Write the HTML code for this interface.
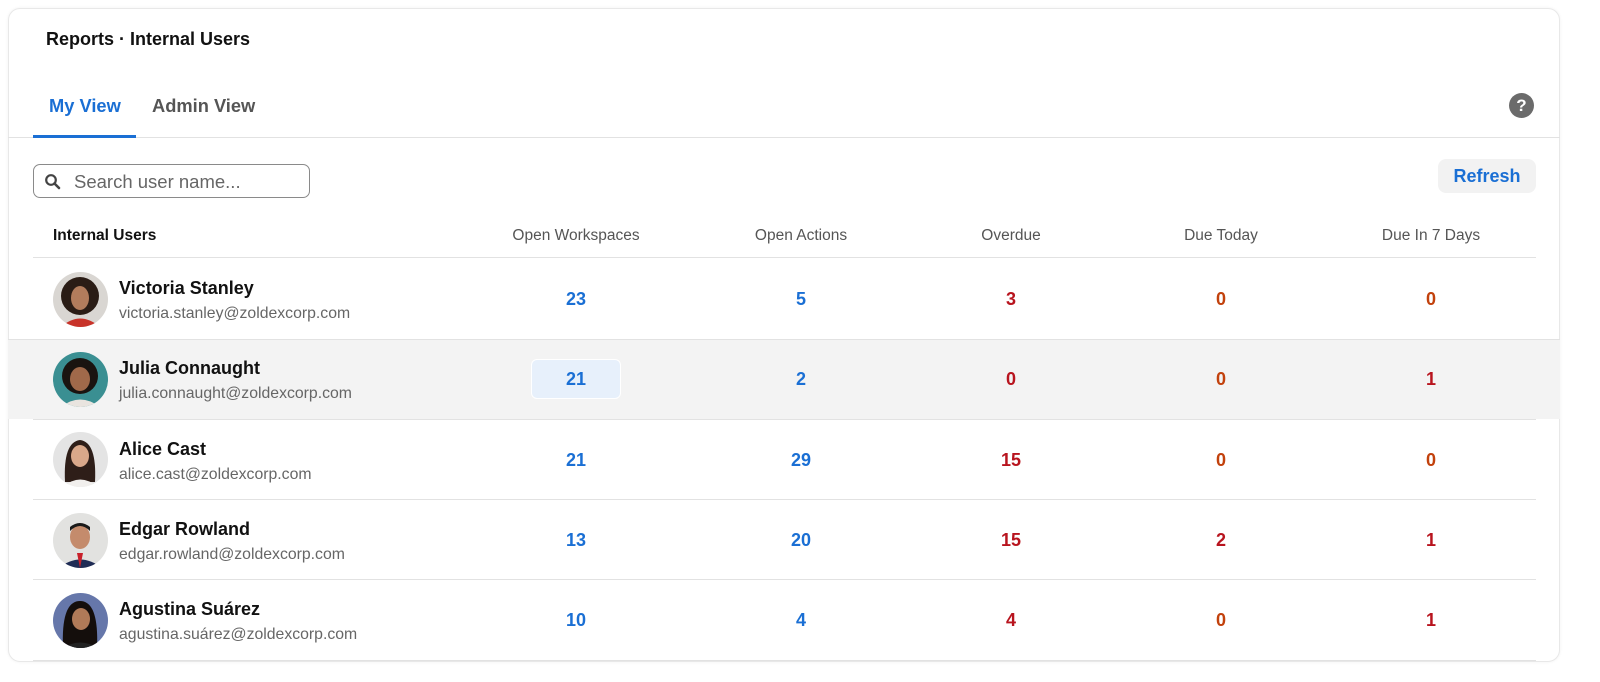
<!DOCTYPE html>
<html><head><meta charset="utf-8">
<style>
*{box-sizing:border-box;margin:0;padding:0}
body{width:1600px;height:682px;background:#fff;font-family:"Liberation Sans",Arial,sans-serif;position:relative;overflow:hidden}
.card{position:absolute;left:8px;top:8px;width:1552px;height:654px;border:1px solid #e8e8e8;border-radius:12px;box-shadow:0 0 3px rgba(0,0,0,.06);overflow:hidden}
.abs{position:absolute}
.title{left:46px;top:29px;font-size:18px;font-weight:bold;color:#111}
.tab{top:95px;font-size:18.3px;font-weight:bold}
.tabline{left:33px;top:135px;width:103px;height:3px;background:#1a6fd4}
.hr{left:8px;top:137px;width:1552px;height:1px;background:#e2e2e2}
.help{left:1509px;top:93px;width:25px;height:25px;border-radius:50%;background:#6b6b6b;color:#fff;font-weight:bold;font-size:17px;text-align:center;line-height:25px}
.search{left:33px;top:164px;width:277px;height:34px;border:1.5px solid #8a8a8a;border-radius:7px}
.search span{position:absolute;left:40px;top:6px;font-size:18.5px;color:#666}
.refresh{left:1438px;top:159px;width:98px;height:34px;border-radius:8px;background:#f2f2f2;color:#1a6fd4;font-weight:bold;font-size:18px;text-align:center;line-height:34px}
.th{top:227px;font-size:15.5px;color:#555;transform:translateX(-50%);white-space:nowrap}
.row{left:33px;width:1503px;height:81px;border-top:1px solid #e2e2e2}
.hl{background:#f3f3f3}
.name{left:119px;font-size:18px;font-weight:bold;color:#111}
.email{left:119px;font-size:15.8px;color:#666}
.av{left:53px;width:55px;height:55px;border-radius:50%;overflow:hidden}
.n{font-size:18px;font-weight:bold;transform:translateX(-50%)}
.b{color:#1a6fd4}.r{color:#b8141e}.o{color:#c2410c}
.pill{left:531px;top:359px;width:90px;height:40px;border-radius:6px;background:#e7f0fb;border:1px solid #fff}
</style></head><body>
<div class="card"></div>
<div class="abs title">Reports · Internal Users</div>
<div class="abs tab" style="left:49px;color:#1a6fd4">My View</div>
<div class="abs tab" style="left:152px;color:#555">Admin View</div>
<div class="abs hr"></div>
<div class="abs tabline"></div>
<div class="abs help">?</div>
<div class="abs search"><svg style="position:absolute;left:10px;top:8px" width="18" height="18" viewBox="0 0 18 18"><circle cx="7" cy="7" r="4.8" fill="none" stroke="#444" stroke-width="2.2"/><path d="M10.5 10.5L15 15" stroke="#444" stroke-width="2.6" stroke-linecap="round"/></svg><span>Search user name...</span></div>
<div class="abs refresh">Refresh</div>

<div class="abs" style="left:53px;top:227px;font-size:15.5px;color:#111;font-weight:bold">Internal Users</div>
<div class="abs th" style="left:576px">Open Workspaces</div>
<div class="abs th" style="left:801px">Open Actions</div>
<div class="abs th" style="left:1011px">Overdue</div>
<div class="abs th" style="left:1221px">Due Today</div>
<div class="abs th" style="left:1431px">Due In 7 Days</div>

<div class="abs row" style="top:257px"></div>
<div class="abs hl" style="left:8px;top:339px;width:1552px;height:80px;border-top:1px solid #e2e2e2"></div>
<div class="abs row" style="top:419px"></div>
<div class="abs row" style="top:499px"></div>
<div class="abs row" style="top:579px"></div>
<div class="abs" style="left:33px;top:660px;width:1503px;height:1px;background:#e2e2e2"></div>
<div class="abs pill"></div>

<svg class="abs av" style="top:272px" viewBox="0 0 55 55"><rect width="55" height="55" fill="#d9d6d2"/><circle cx="27" cy="24" r="19" fill="#2a1c15"/><ellipse cx="27" cy="26" rx="9" ry="12" fill="#b27c5c"/><path d="M8 55 Q27 38 47 55Z" fill="#c8332a"/></svg>
<svg class="abs av" style="top:352px" viewBox="0 0 55 55"><rect width="55" height="55" fill="#3a8f92"/><circle cx="27" cy="24" r="18" fill="#1a1410"/><ellipse cx="27" cy="27" rx="10" ry="12" fill="#a0694a"/><path d="M8 55 Q27 40 47 55Z" fill="#e9e4df"/></svg>
<svg class="abs av" style="top:432px" viewBox="0 0 55 55"><rect width="55" height="55" fill="#e4e4e4"/><path d="M12 50 Q10 10 27 8 Q44 10 42 50Z" fill="#2e1e18"/><ellipse cx="27" cy="24" rx="9" ry="11" fill="#d9a88a"/><path d="M10 55 Q27 40 45 55Z" fill="#f1efed"/></svg>
<svg class="abs av" style="top:513px" viewBox="0 0 55 55"><rect width="55" height="55" fill="#e2e2e0"/><ellipse cx="27" cy="24" rx="10" ry="12" fill="#c48b6c"/><path d="M17 18 Q27 8 37 18 L37 14 Q27 6 17 14Z" fill="#1a1a1a"/><path d="M6 55 Q27 38 49 55Z" fill="#1f2c55"/><path d="M24 40 L27 55 L30 40Z" fill="#c8202a"/></svg>
<svg class="abs av" style="top:593px" viewBox="0 0 55 55"><rect width="55" height="55" fill="#6677aa"/><path d="M10 55 Q8 8 27 8 Q46 8 44 55Z" fill="#140e0c"/><ellipse cx="28" cy="26" rx="9" ry="11" fill="#b07a58"/><path d="M10 55 Q27 44 45 55Z" fill="#222"/></svg>

<div class="abs name" style="top:278px">Victoria Stanley</div>
<div class="abs email" style="top:305px">victoria.stanley@zoldexcorp.com</div>
<div class="abs name" style="top:358px">Julia Connaught</div>
<div class="abs email" style="top:385px">julia.connaught@zoldexcorp.com</div>
<div class="abs name" style="top:439px">Alice Cast</div>
<div class="abs email" style="top:466px">alice.cast@zoldexcorp.com</div>
<div class="abs name" style="top:519px">Edgar Rowland</div>
<div class="abs email" style="top:546px">edgar.rowland@zoldexcorp.com</div>
<div class="abs name" style="top:599px">Agustina Suárez</div>
<div class="abs email" style="top:626px">agustina.suárez@zoldexcorp.com</div>

<div class="abs n b" style="left:576px;top:289px">23</div><div class="abs n b" style="left:801px;top:289px">5</div><div class="abs n r" style="left:1011px;top:289px">3</div><div class="abs n o" style="left:1221px;top:289px">0</div><div class="abs n o" style="left:1431px;top:289px">0</div>
<div class="abs n b" style="left:576px;top:369px">21</div><div class="abs n b" style="left:801px;top:369px">2</div><div class="abs n r" style="left:1011px;top:369px">0</div><div class="abs n o" style="left:1221px;top:369px">0</div><div class="abs n r" style="left:1431px;top:369px">1</div>
<div class="abs n b" style="left:576px;top:450px">21</div><div class="abs n b" style="left:801px;top:450px">29</div><div class="abs n r" style="left:1011px;top:450px">15</div><div class="abs n o" style="left:1221px;top:450px">0</div><div class="abs n o" style="left:1431px;top:450px">0</div>
<div class="abs n b" style="left:576px;top:530px">13</div><div class="abs n b" style="left:801px;top:530px">20</div><div class="abs n r" style="left:1011px;top:530px">15</div><div class="abs n r" style="left:1221px;top:530px">2</div><div class="abs n r" style="left:1431px;top:530px">1</div>
<div class="abs n b" style="left:576px;top:610px">10</div><div class="abs n b" style="left:801px;top:610px">4</div><div class="abs n r" style="left:1011px;top:610px">4</div><div class="abs n o" style="left:1221px;top:610px">0</div><div class="abs n r" style="left:1431px;top:610px">1</div>
</body></html>
